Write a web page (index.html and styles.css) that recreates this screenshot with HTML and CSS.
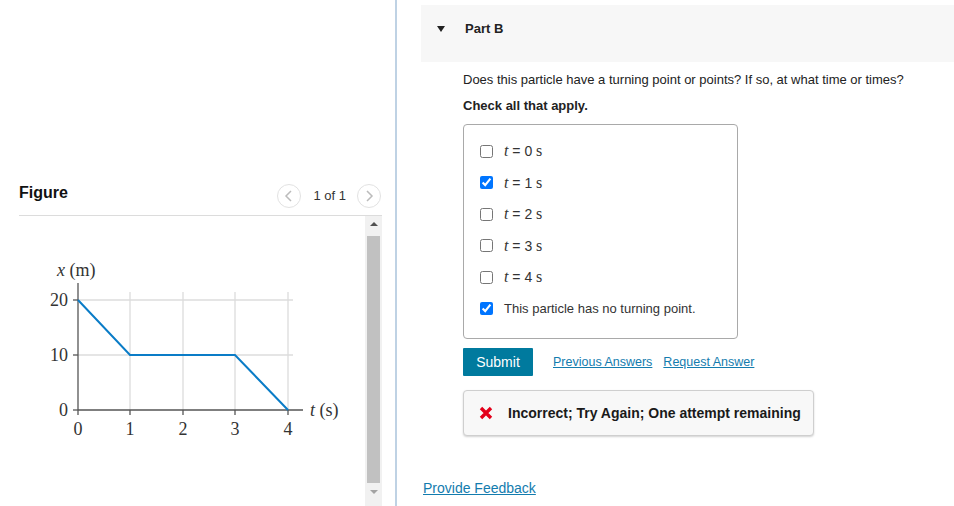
FILE: index.html
```html
<!DOCTYPE html>
<html>
<head>
<meta charset="utf-8">
<link rel="stylesheet" href="styles.css">
</head>
<body>
<div class="page">
  <div class="left">
    <div class="fig-head">
      <div class="fig-title">Figure</div>
      <div class="pager">
        <span class="circ"><svg width="10" height="12" viewBox="0 0 10 12"><path d="M7 1 L2 6 L7 11" fill="none" stroke="#bbb" stroke-width="1.5"/></svg></span>
        <span class="count">1 of 1</span>
        <span class="circ"><svg width="10" height="12" viewBox="0 0 10 12"><path d="M3 1 L8 6 L3 11" fill="none" stroke="#bbb" stroke-width="1.5"/></svg></span>
      </div>
    </div>
    <div class="fig-body">
      <div class="graph">
        <svg width="346" height="290" viewBox="0 0 346 290">
          <g stroke="#dcdcdc" stroke-width="1.3">
            <line x1="111" y1="76" x2="111" y2="194"/>
            <line x1="164" y1="76" x2="164" y2="194"/>
            <line x1="216" y1="76" x2="216" y2="194"/>
            <line x1="269" y1="76" x2="269" y2="194"/>
            <line x1="59" y1="84" x2="274" y2="84"/>
            <line x1="59" y1="139" x2="274" y2="139"/>
          </g>
          <g stroke="#555" stroke-width="1.3">
            <line x1="59" y1="67" x2="59" y2="194"/>
            <line x1="59" y1="194" x2="284" y2="194"/>
            <line x1="54" y1="84" x2="59" y2="84"/>
            <line x1="54" y1="139" x2="59" y2="139"/>
            <line x1="54" y1="194" x2="59" y2="194"/>
            <line x1="59" y1="194" x2="59" y2="199"/>
            <line x1="111" y1="194" x2="111" y2="199"/>
            <line x1="164" y1="194" x2="164" y2="199"/>
            <line x1="216" y1="194" x2="216" y2="199"/>
            <line x1="269" y1="194" x2="269" y2="199"/>
          </g>
          <polyline points="59,84 111,139 216,139 269,194" fill="none" stroke="#0a7cc7" stroke-width="2"/>
          <g class="gl">
            <text x="38" y="60"><tspan font-style="italic">x</tspan> (m)</text>
            <text x="49" y="90" text-anchor="end">20</text>
            <text x="49" y="145" text-anchor="end">10</text>
            <text x="49" y="200" text-anchor="end">0</text>
            <text x="59" y="219" text-anchor="middle">0</text>
            <text x="111" y="219" text-anchor="middle">1</text>
            <text x="164" y="219" text-anchor="middle">2</text>
            <text x="216" y="219" text-anchor="middle">3</text>
            <text x="269" y="219" text-anchor="middle">4</text>
            <text x="291" y="200"><tspan font-style="italic">t</tspan> (s)</text>
          </g>
        </svg>
      </div>
      <div class="scrollbar">
        <div class="arrow up"></div>
        <div class="thumb"></div>
        <div class="arrow down"></div>
      </div>
    </div>
  </div>
  <div class="right">
    <div class="part-head">
      <span class="tri"></span>
      <span class="part-title">Part B</span>
    </div>
    <div class="content">
      <p class="question">Does this particle have a turning point or points? If so, at what time or times?</p>
      <p class="instr">Check all that apply.</p>
      <div class="choices">
        <label class="row"><input type="checkbox"><span class="lbl mathlbl"><i class="m">t</i> = 0 <span class="m">s</span></span></label>
        <label class="row"><input type="checkbox" checked><span class="lbl mathlbl"><i class="m">t</i> = 1 <span class="m">s</span></span></label>
        <label class="row"><input type="checkbox"><span class="lbl mathlbl"><i class="m">t</i> = 2 <span class="m">s</span></span></label>
        <label class="row"><input type="checkbox"><span class="lbl mathlbl"><i class="m">t</i> = 3 <span class="m">s</span></span></label>
        <label class="row"><input type="checkbox"><span class="lbl mathlbl"><i class="m">t</i> = 4 <span class="m">s</span></span></label>
        <label class="row"><input type="checkbox" checked><span class="lbl">This particle has no turning point.</span></label>
      </div>
      <div class="actions">
        <button class="submit">Submit</button>
        <a class="link" href="#">Previous Answers</a>
        <a class="link" href="#">Request Answer</a>
      </div>
      <div class="feedback">
        <svg class="xicon" width="14" height="14" viewBox="0 0 14 14"><path d="M2 2 L12 12 M12 2 L2 12" stroke="#e3001b" stroke-width="3.4" stroke-linecap="butt"/></svg>
        <span class="fb-text">Incorrect; Try Again; One attempt remaining</span>
      </div>
    </div>
    <div class="footer">
      <a class="pf" href="#">Provide Feedback</a>
    </div>
  </div>
</div>
</body>
</html>
```

FILE: styles.css
```css
* { box-sizing: border-box; }
html, body { margin: 0; padding: 0; background: #fff; }
body { font-family: "Liberation Sans", Arial, sans-serif; color: #222; width: 954px; height: 506px; overflow: hidden; }
.page { display: flex; height: 506px; }

.left { width: 397px; border-right: 2px solid #bfd2e4; padding: 180px 13px 0 19px; display: flex; flex-direction: column; }
.fig-head { height: 36px; border-bottom: 1px solid #dcdcdc; display: flex; align-items: center; justify-content: space-between; padding-bottom: 4px; }
.fig-title { font-weight: bold; font-size: 16px; color: #111; padding-bottom: 6px; }
.pager { display: flex; align-items: center; margin-right: 1px; }
.circ { width: 24px; height: 24px; border: 1px solid #e2e2e2; border-radius: 50%; display: flex; align-items: center; justify-content: center; }
.count { font-size: 13px; color: #333; margin: 0 11px 0 12px; }

.fig-body { flex: 1; display: flex; }
.graph { flex: 1; }
.graph svg { display: block; }
.gl { font-family: "Liberation Serif", "Times New Roman", serif; font-size: 18px; fill: #333; }

.scrollbar { width: 17px; background: #f1f1f1; display: flex; flex-direction: column; align-items: center; }
.arrow { width: 0; height: 0; border-left: 4px solid transparent; border-right: 4px solid transparent; }
.arrow.up { border-bottom: 4px solid #505050; margin: 6px 0 10px; }
.arrow.down { border-top: 4px solid #a3a3a3; margin: 7px 0 0; }
.thumb { width: 13px; height: 247px; background: #c1c1c1; }

.right { flex: 1; display: flex; flex-direction: column; }
.part-head { margin: 5px 0 0 24px; height: 57px; background: #f7f7f7; display: flex; align-items: center; padding-left: 16px; padding-bottom: 10px; }
.tri { width: 0; height: 0; border-left: 4.5px solid transparent; border-right: 4.5px solid transparent; border-top: 6px solid #222; }
.part-title { font-weight: bold; font-size: 13px; margin-left: 20px; color: #222; }

.content { padding-left: 66px; }
.question { font-size: 13px; margin: 10px 0 0; line-height: 16px; color: #222; }
.instr { font-size: 13px; font-weight: bold; margin: 10px 0 0; line-height: 16px; color: #222; }
.choices { margin-top: 10px; width: 275px; height: 215px; border: 1px solid #a9a9a9; border-radius: 4px; padding: 16px 0 0 16px; display: flex; flex-direction: column; gap: 11.6px; }
.row { display: flex; align-items: center; height: 20px; font-size: 13px; color: #333; }
.row input { margin: 0; width: 13px; height: 13px; }
.lbl { margin-left: 11px; }
.mathlbl { font-size: 14px; }
.m { font-family: "Liberation Serif", "Times New Roman", serif; font-size: 16px; }

.actions { margin-top: 9px; display: flex; align-items: center; }
.submit { width: 70px; height: 28px; background: #007a9e; color: #fff; border: none; border-radius: 1px; font-family: "Liberation Sans", Arial, sans-serif; font-size: 14px; padding: 0; }
.link { font-size: 12.5px; color: #137cae; text-decoration: underline; margin-left: 20px; }
.link + .link { margin-left: 11px; }

.feedback { margin-top: 14px; width: 351px; height: 46px; border: 1px solid #cfcfcf; border-radius: 4px; background: #f8f8f8; box-shadow: 0 1px 2px rgba(0,0,0,0.18); display: flex; align-items: center; padding-left: 15px; }
.fb-text { margin-left: 15px; font-weight: bold; font-size: 14px; color: #1a1a1a; }

.footer { margin-top: 43px; padding-left: 26px; }
.pf { font-size: 14px; color: #137cae; text-decoration: underline; }
```
